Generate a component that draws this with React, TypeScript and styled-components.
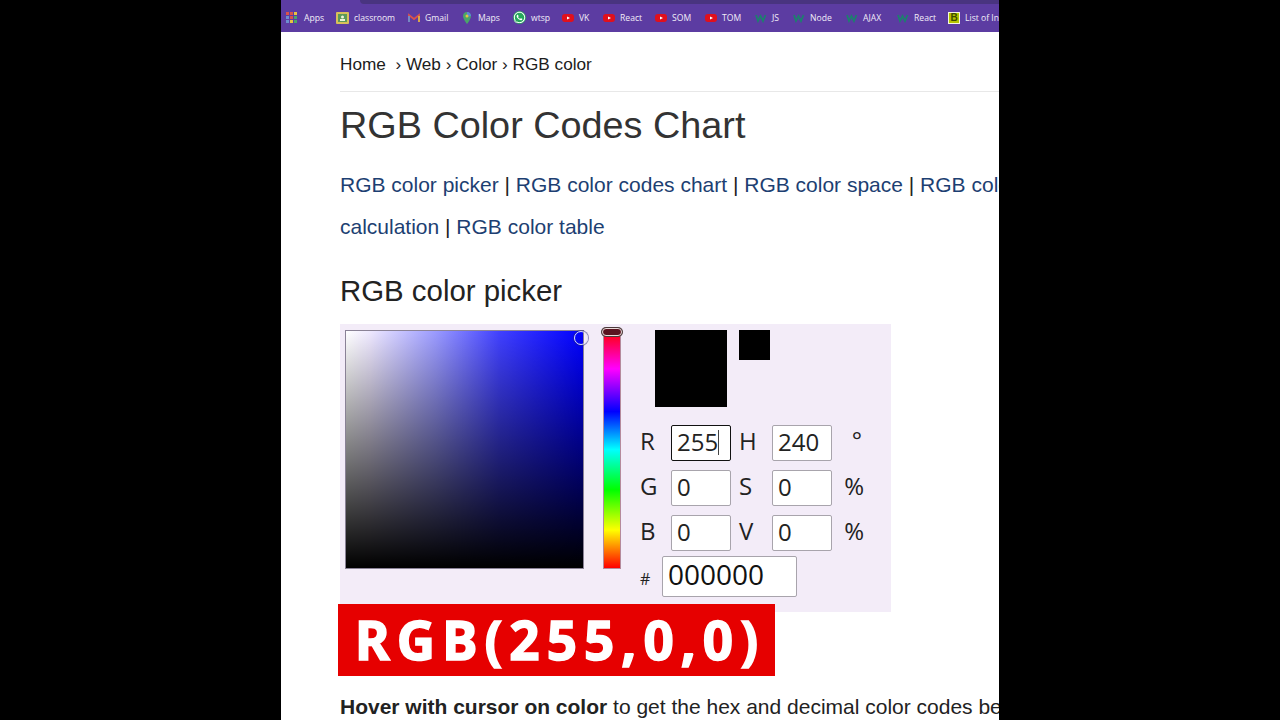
import React from 'react'
import styled, { createGlobalStyle } from 'styled-components'
import { FaWhatsapp } from 'react-icons/fa'

const GlobalStyle = createGlobalStyle`
  html, body {
    margin: 0;
    padding: 0;
    height: 720px;
    overflow: hidden;
    background: #000;
  }
`
const Page = styled.div`
  width: 718px;
  height: 720px;
  margin-left: 281px;
  background: #fff;
  overflow: hidden;
  font-family: 'Liberation Sans', Arial, sans-serif;
`
const BookmarkBar = styled.div`
  height: 32px;
  background: #5c3ca2;
  overflow: hidden;
`
const TabEdge = styled.div`
  height: 4px;
  margin-left: 79px;
  background: #493480;
  border-bottom-left-radius: 4px;
`
const Bookmarks = styled.div`
  display: flex;
  align-items: center;
  height: 27px;
  padding-left: 5px;
  white-space: nowrap;
`
const Bookmark = styled.div<{ $width: number }>`
  flex: 0 0 ${p => p.$width}px;
  display: flex;
  align-items: center;
  gap: 5px;
  font-family: 'Open Sans', sans-serif;
  font-size: 8.6px;
  color: #f1edf8;
`
const AppsGrid = styled.div`
  display: grid;
  grid-template-columns: repeat(3, 3px);
  gap: 1px;
  width: 13px;
`
const AppsDot = styled.i<{ $color: string }>`
  width: 3px;
  height: 3px;
  background: ${p => p.$color};
`
const FontIcon = styled.div`
  width: 12px;
  height: 12px;
  background: #b5c400;
  color: #3c4a00;
  border: 1px solid #f4f4e0;
  box-sizing: border-box;
  font: bold 10px/10px 'Liberation Sans', sans-serif;
  text-align: center;
`
const Main = styled.div`
  padding: 0 0 0 59px;
`
const Breadcrumb = styled.div`
  display: flex;
  height: 53px;
  padding-top: 6px;
  align-items: center;
  font-size: 17.2px;
  color: #1c1c1c;
  border-bottom: 1px solid #e8e8e8;
  white-space: pre;
`
const Title = styled.h1`
  margin: 0;
  padding-top: 11px;
  font-size: 37.8px;
  line-height: 44px;
  font-weight: 400;
  color: #333;
  white-space: nowrap;
`
const LinkBlock = styled.div`
  margin-top: 17px;
  font-size: 21px;
  line-height: 42px;
  color: #222;
  white-space: nowrap;
`
const TextLink = styled.a`
  color: #1d3f72;
  text-decoration: none;
`
const SectionTitle = styled.h2`
  margin: 23px 0 0;
  font-size: 29.4px;
  line-height: 40px;
  font-weight: 400;
  color: #222;
`
const Picker = styled.div`
  display: flex;
  box-sizing: border-box;
  width: 551px;
  height: 288px;
  margin-top: 13px;
  padding: 6px 0 0 5px;
  background: #f3ecf8;
`
const ColorField = styled.div`
  position: relative;
  box-sizing: border-box;
  width: 239px;
  height: 239px;
  border: 1px solid #8a8296;
  background: linear-gradient(to bottom, transparent, #000),
    linear-gradient(to right, #fff 0%, #eee8ff 10%, #9a9aff 38%, #4040ff 65%, #00f 100%);
`
const FieldCursor = styled.div`
  position: absolute;
  top: 0;
  right: -5px;
  width: 12px;
  height: 12px;
  border: 1px solid #dfe3f5;
  box-shadow: 0 0 0 1px rgba(40, 40, 120, 0.5);
  border-radius: 50%;
`
const HueBar = styled.div`
  position: relative;
  box-sizing: border-box;
  width: 18px;
  height: 239px;
  margin-left: 19px;
  border: 1px solid #b58a9c;
  background: linear-gradient(
    to bottom,
    #f00 0%,
    #f0f 16%,
    #00f 34%,
    #0ff 50%,
    #0f0 67%,
    #ff0 84%,
    #f00 100%
  );
`
const HueHandle = styled.div`
  position: absolute;
  top: -3px;
  left: -2px;
  box-sizing: border-box;
  width: 20px;
  height: 8px;
  border: 1px solid #eadcdc;
  box-shadow: 0 0 0 1px #4a3a3a;
  background: #5a1420;
  border-radius: 4px;
`
const Controls = styled.div`
  margin-left: 19px;
  font-family: 'Open Sans', 'Noto Sans', sans-serif;
  color: #222;
`
const Swatches = styled.div`
  display: flex;
  align-items: flex-start;
  gap: 12px;
  margin-left: 15px;
`
const Swatch = styled.div<{ $w: number; $h: number }>`
  width: ${p => p.$w}px;
  height: ${p => p.$h}px;
  background: #000;
`
const ValueGrid = styled.div`
  display: grid;
  grid-template-columns: 31px 60px 41px 60px 33px;
  grid-auto-rows: 36px;
  row-gap: 9px;
  margin-top: 18px;
`
const Label = styled.span<{ $indent?: boolean }>`
  padding-left: ${p => (p.$indent ? 8 : 0)}px;
  font-size: 24px;
  line-height: 32px;
`
const Unit = styled.span`
  padding-right: 1px;
  font-size: 24px;
  line-height: 32px;
  text-align: right;
`
const Degree = styled(Unit)`
  padding-right: 3px;
  line-height: 30px;
`
const Input = styled.div<{ $focused?: boolean }>`
  box-sizing: border-box;
  height: 36px;
  padding-left: 5px;
  background: #fff;
  border: 1px solid ${p => (p.$focused ? '#111' : '#a8a4ac')};
  border-radius: 2px;
  font-size: 24px;
  line-height: 31px;
`
const Caret = styled.span`
  display: inline-block;
  width: 1px;
  height: 25px;
  vertical-align: -4px;
  background: #444;
`
const HexRow = styled.div`
  display: flex;
  align-items: center;
  margin-top: 5px;
`
const HexLabel = styled.span`
  width: 22px;
  padding-top: 4px;
  font-size: 16px;
`
const HexInput = styled.div`
  box-sizing: border-box;
  width: 135px;
  height: 41px;
  padding-left: 5px;
  background: #fff;
  border: 1px solid #a8a4ac;
  border-radius: 2px;
  font-size: 28px;
  line-height: 35px;
  color: #111;
`
const Banner = styled.div`
  position: relative;
  box-sizing: border-box;
  width: 437px;
  height: 72px;
  margin: -8px 0 0 -2px;
  padding-left: 17px;
  background: #e60000;
  color: #fff;
  font-family: 'Noto Sans', sans-serif;
  font-weight: 700;
  font-size: 53px;
  line-height: 72px;
  letter-spacing: 7px;
  -webkit-text-stroke: 1.5px #fff;
  white-space: nowrap;
`
const Note = styled.p`
  margin: 19px 0 0;
  font-size: 21px;
  line-height: 24px;
  color: #222;
  white-space: nowrap;
`

const Youtube = () => (
  <svg width="12" height="12" viewBox="0 0 12 12">
    <rect x="0" y="2" width="12" height="8" rx="3" fill="#e0101c" />
    <path d="M5 4.4 L8 6 L5 7.6 Z" fill="#fff" />
  </svg>
)
const W3 = () => (
  <svg width="12" height="12" viewBox="0 0 12 12">
    <path d="M1 3 L3 9 L5.5 4 L8 9 L10.5 3" fill="none" stroke="#1d7f6e" strokeWidth="1.8" />
  </svg>
)
const Classroom = () => (
  <svg width="13" height="12" viewBox="0 0 13 12">
    <rect width="13" height="12" rx="1" fill="#d8c05a" />
    <rect x="2" y="2" width="9" height="8" fill="#5c9a58" />
    <circle cx="6.5" cy="5" r="1.5" fill="#eef2d8" />
    <rect x="4" y="7" width="5" height="2" fill="#eef2d8" />
  </svg>
)
const Gmail = () => (
  <svg width="12" height="12" viewBox="0 0 12 12">
    <path d="M1 10 V3 L6 7 L11 3 V10" fill="none" stroke="#d9534a" strokeWidth="1.8" />
    <path d="M1 10 V4" stroke="#6c8fd0" strokeWidth="1.8" />
    <path d="M11 10 V4" stroke="#d8b04a" strokeWidth="1.8" />
  </svg>
)
const Maps = () => (
  <svg width="12" height="12" viewBox="0 0 12 12">
    <path d="M6 0 C3.4 0 2 2 2 4 C2 7 6 12 6 12 C6 12 10 7 10 4 C10 2 8.6 0 6 0 Z" fill="#4aa56a" />
    <path d="M6 0 C8.6 0 10 2 10 4 L6 5 Z" fill="#5b86d8" />
    <circle cx="6" cy="4" r="1.5" fill="#e8c33f" />
  </svg>
)
const WhatsApp = () => <FaWhatsapp size={13} color="#fff" style={{ background: '#25a85a', borderRadius: '50%' }} />

const appsColors = ['#d9534a', '#d9534a', '#e8c33f', '#6c8fd0', '#d9534a', '#4aa56a', '#6c8fd0', '#e8c33f', '#4aa56a']

const bookmarks: { label: string; width: number; icon: React.ReactNode }[] = [
  { label: 'classroom', width: 72, icon: <Classroom /> },
  { label: 'Gmail', width: 53, icon: <Gmail /> },
  { label: 'Maps', width: 52, icon: <Maps /> },
  { label: 'wtsp', width: 49, icon: <WhatsApp /> },
  { label: 'VK', width: 41, icon: <Youtube /> },
  { label: 'React', width: 52, icon: <Youtube /> },
  { label: 'SOM', width: 50, icon: <Youtube /> },
  { label: 'TOM', width: 50, icon: <Youtube /> },
  { label: 'JS', width: 38, icon: <W3 /> },
  { label: 'Node', width: 53, icon: <W3 /> },
  { label: 'AJAX', width: 51, icon: <W3 /> },
  { label: 'React', width: 51, icon: <W3 /> }
]

const App = () => {
  return (
    <Page>
      <GlobalStyle />
      <BookmarkBar>
        <TabEdge />
        <Bookmarks>
          <Bookmark $width={50}>
            <AppsGrid>
              {appsColors.map((c, i) => (
                <AppsDot key={i} $color={c} />
              ))}
            </AppsGrid>
            Apps
          </Bookmark>
          {bookmarks.map((b, i) => (
            <Bookmark key={i} $width={b.width}>
              {b.icon}
              {b.label}
            </Bookmark>
          ))}
          <Bookmark $width={60}>
            <FontIcon>B</FontIcon>
            List of In
          </Bookmark>
        </Bookmarks>
      </BookmarkBar>
      <Main>
        <Breadcrumb>Home  › Web › Color › RGB color</Breadcrumb>
        <Title>RGB Color Codes Chart</Title>
        <LinkBlock>
          <TextLink>RGB color picker</TextLink> | <TextLink>RGB color codes chart</TextLink> |{' '}
          <TextLink>RGB color space</TextLink> | <TextLink>RGB color format and</TextLink>
          <br />
          <TextLink>calculation</TextLink> | <TextLink>RGB color table</TextLink>
        </LinkBlock>
        <SectionTitle>RGB color picker</SectionTitle>
        <Picker>
          <ColorField>
            <FieldCursor />
          </ColorField>
          <HueBar>
            <HueHandle />
          </HueBar>
          <Controls>
            <Swatches>
              <Swatch $w={72} $h={77} />
              <Swatch $w={31} $h={30} />
            </Swatches>
            <ValueGrid>
              <Label>R</Label>
              <Input $focused>
                255
                <Caret />
              </Input>
              <Label $indent>H</Label>
              <Input>240</Input>
              <Degree>°</Degree>
              <Label>G</Label>
              <Input>0</Input>
              <Label $indent>S</Label>
              <Input>0</Input>
              <Unit>%</Unit>
              <Label>B</Label>
              <Input>0</Input>
              <Label $indent>V</Label>
              <Input>0</Input>
              <Unit>%</Unit>
            </ValueGrid>
            <HexRow>
              <HexLabel>#</HexLabel>
              <HexInput>000000</HexInput>
            </HexRow>
          </Controls>
        </Picker>
        <Banner>RGB(255,0,0)</Banner>
        <Note>
          <b>Hover with cursor on color</b> to get the hex and decimal color codes below:
        </Note>
      </Main>
    </Page>
  )
}

export default App
